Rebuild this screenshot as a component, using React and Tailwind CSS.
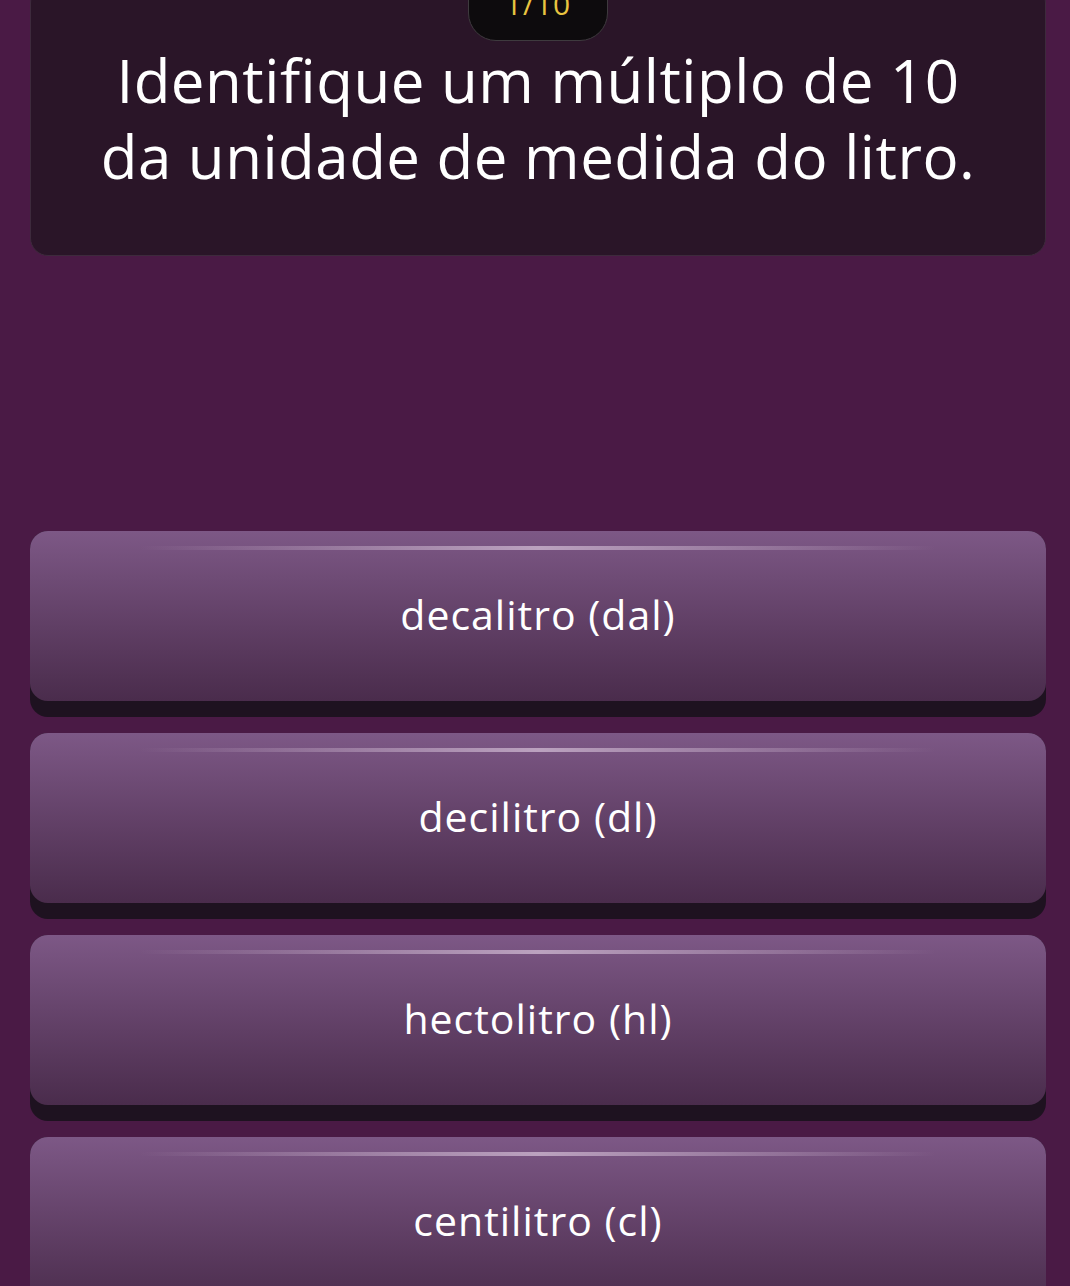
import React from 'react';

const options = ['decalitro (dal)', 'decilitro (dl)', 'hectolitro (hl)', 'centilitro (cl)'];

const OptionButton = ({ label }) => (
    <button className="w-full rounded-[18px] bg-[#1e1220] pb-[16px] text-left">
        <div className="relative h-[170px] rounded-[18px] bg-gradient-to-b from-[#7d5886] to-[#4a2c4c] flex items-center justify-center">
            {/* glossy line */}
            <div className="absolute left-[110px] right-[110px] top-[15px] h-[4px] bg-gradient-to-r from-transparent via-[#bba2bf] to-transparent" />
            <span className="text-[41px] tracking-[1px] text-white pb-[2px]">{label}</span>
        </div>
    </button>
);

export default function App() {
    return (
        <div
            className="min-h-screen bg-[#4a1a45] pl-[30px] pr-[24px] overflow-hidden"
            style={{ fontFamily: '"Open Sans", "Noto Sans", sans-serif' }}
        >
            {/* Question card */}
            <div className="relative -mt-[15px] h-[271px] rounded-[18px] border border-[#3d2a3c] bg-[#2a1528] flex items-center justify-center">
                <div className="absolute left-1/2 -translate-x-1/2 top-0 w-[140px] h-[55px] rounded-b-[28px] rounded-t-[10px] border border-[#3e3a3e] bg-[#0d0b0d] flex items-end justify-center pb-[21px]">
                    <span className="text-[30px] leading-none tracking-[1px] text-[#e8c440]">1/10</span>
                </div>
                <h1 className="-mt-[6px] text-center text-[60px] leading-[76px] text-white tracking-[0.5px]">
                    Identifique um múltiplo de 10
                    <br />
                    da unidade de medida do litro.
                </h1>
            </div>

            <div className="mt-[275px] flex flex-col gap-[16px]">
                {options.map((o) => (
                    <OptionButton key={o} label={o} />
                ))}
            </div>
        </div>
    );
}
